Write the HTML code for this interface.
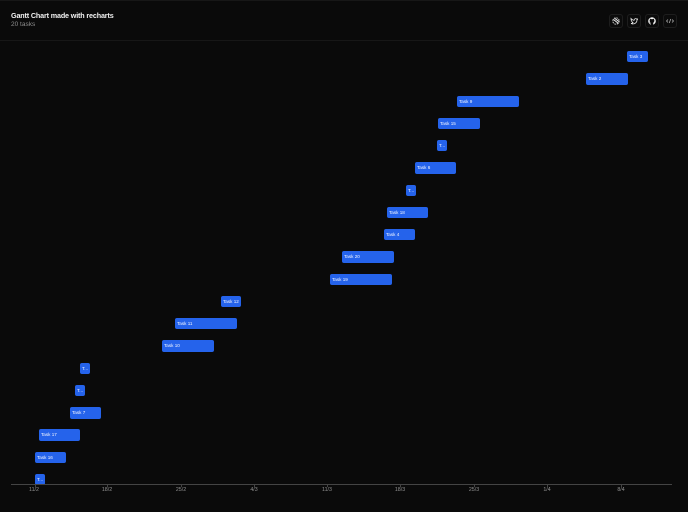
<!DOCTYPE html>
<html lang="en">
<head>
<meta charset="utf-8">
<title>Gantt Chart made with recharts</title>
<style>
html,body{margin:0;padding:0;background:#0a0a0a}
body{width:688px;height:512px;position:relative;overflow:hidden;font-family:"Liberation Sans",sans-serif;color:#fafafa}
.hline{position:absolute;left:0;width:688px;height:1px;background:#171717}
.title{position:absolute;left:11px;top:10px;font-size:7.2px;line-height:11px;font-weight:700;color:#f2f2f2;white-space:nowrap;letter-spacing:-.15px}
.sub{position:absolute;left:11px;top:20px;font-size:6.5px;line-height:10px;color:#8f8f8f;white-space:nowrap}
.btn{position:absolute;top:14px;width:14px;height:14px;box-sizing:border-box;border:1px solid #1d1d1d;border-radius:3px;background:#0b0b0b}
.btn svg{position:absolute;left:2px;top:2px;width:8px;height:8px}
.bar{position:absolute;height:11.4px;background:#2563eb;border-radius:2px;font-size:4.6px;line-height:11.6px;color:#f4f7ff;padding-left:2px;box-sizing:border-box;white-space:nowrap;overflow:hidden}
.axis{position:absolute;left:11px;top:484px;width:661px;height:1px;background:#444}
.tick{position:absolute;top:485px;width:1px;height:2px;background:#444}
.lbl{position:absolute;top:486px;width:30px;text-align:center;font-size:5.3px;line-height:8px;color:#929292}
</style>
</head>
<body>
<div class="hline" style="top:0"></div>
<div class="hline" style="top:40px"></div>
<div class="title">Gantt Chart made with recharts</div>
<div class="sub">20 tasks</div>

<div class="btn" style="left:609px"><svg viewBox="0 0 8 8"><circle cx="4" cy="4" r="3.2" fill="none" stroke="#ddd" stroke-width=".9" stroke-dasharray="1.6 .9"/><path d="M1.5 2.5L6.5 6.5M3 1.5L6.8 4.5" stroke="#eee" stroke-width="1"/></svg></div>
<div class="btn" style="left:627px"><svg viewBox="0 0 8 8"><path d="M1 1.5C2.5 3 3 3.3 4 3.3C4 2 5.6 1 6.8 2.2L7.6 2L7 3.2C7 5.5 5 7 2.5 7L1 6.5C2 6.5 2.6 6.2 3 5.6C2 5 1 3.5 1 1.5Z" fill="none" stroke="#eee" stroke-width=".8"/></svg></div>
<div class="btn" style="left:645px"><svg viewBox="0 0 8 8"><path d="M4 .3A3.8 3.8 0 0 0 2.8 7.7V6.4C1.8 6.6 1.6 6 1.4 5.6C1.9 5.5 2.3 5.9 2.8 6C2.5 5.6 1.6 5 1.6 3.6C1.6 3.1 1.8 2.7 2 2.4V1.6L3 2.1H5L6 1.6V2.4C6.2 2.7 6.4 3.1 6.4 3.6C6.4 5 5.5 5.6 5.2 5.8V7.7A3.8 3.8 0 0 0 4 .3Z" fill="#f2f2f2"/></svg></div>
<div class="btn" style="left:663px"><svg viewBox="0 0 8 8"><path d="M2 2.5L.5 4L2 5.5M6 2.5L7.5 4L6 5.5M4.7 2L3.3 6" fill="none" stroke="#bbb" stroke-width=".7"/></svg></div>

<div class="bar" style="left:627px;top:51px;width:21px">Task 3</div>
<div class="bar" style="left:586px;top:73.3px;width:42px">Task 2</div>
<div class="bar" style="left:457px;top:95.5px;width:62px">Task 9</div>
<div class="bar" style="left:438px;top:117.8px;width:42px">Task 15</div>
<div class="bar" style="left:437px;top:140px;width:10px">T...</div>
<div class="bar" style="left:415px;top:162.3px;width:41px">Task 6</div>
<div class="bar" style="left:406px;top:184.6px;width:10px">T...</div>
<div class="bar" style="left:387px;top:206.8px;width:41px">Task 18</div>
<div class="bar" style="left:384px;top:229.1px;width:31px">Task 4</div>
<div class="bar" style="left:342px;top:251.3px;width:52px">Task 20</div>
<div class="bar" style="left:330px;top:273.6px;width:62px">Task 19</div>
<div class="bar" style="left:221px;top:295.9px;width:20px">Task 12</div>
<div class="bar" style="left:175px;top:318.1px;width:62px">Task 11</div>
<div class="bar" style="left:162px;top:340.4px;width:52px">Task 10</div>
<div class="bar" style="left:80px;top:362.6px;width:10px">T...</div>
<div class="bar" style="left:75px;top:384.9px;width:10px">T...</div>
<div class="bar" style="left:70px;top:407.2px;width:31px">Task 7</div>
<div class="bar" style="left:39px;top:429.4px;width:41px">Task 17</div>
<div class="bar" style="left:35px;top:451.7px;width:31px">Task 16</div>
<div class="bar" style="left:35px;top:473.9px;width:10px">T...</div>

<div class="axis"></div>
<div class="tick" style="left:35px"></div><div class="lbl" style="left:19px">11/2</div>
<div class="tick" style="left:107px"></div><div class="lbl" style="left:92px">18/2</div>
<div class="tick" style="left:181px"></div><div class="lbl" style="left:166px">25/2</div>
<div class="tick" style="left:254px"></div><div class="lbl" style="left:239px">4/3</div>
<div class="tick" style="left:327px"></div><div class="lbl" style="left:312px">11/3</div>
<div class="tick" style="left:400px"></div><div class="lbl" style="left:385px">18/3</div>
<div class="tick" style="left:474px"></div><div class="lbl" style="left:459px">25/3</div>
<div class="tick" style="left:547px"></div><div class="lbl" style="left:532px">1/4</div>
<div class="tick" style="left:621px"></div><div class="lbl" style="left:606px">8/4</div>
</body>
</html>
